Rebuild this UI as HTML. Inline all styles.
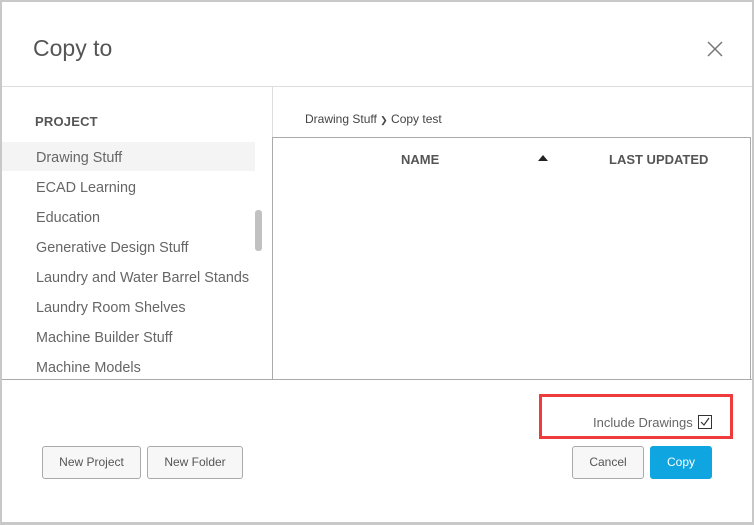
<!DOCTYPE html>
<html><head><style>
*{margin:0;padding:0;box-sizing:border-box}
body{width:754px;height:525px;background:#fff;font-family:"Liberation Sans",sans-serif;position:relative;overflow:hidden}
.frame{position:absolute;left:0;top:0;width:754px;height:525px;border:2px solid #c8c8c8;border-bottom-width:3px}
.a{position:absolute}
.item{position:absolute;left:36px;font-size:14.4px;color:#666}
.btn{position:absolute;height:33px;border:1px solid #aaa;border-radius:3px;background:#f7f7f7;font-size:12px;color:#555;text-align:center;line-height:31px}
</style></head><body>
<div class="frame"></div>
<div class="a" style="left:33px;top:35px;font-size:23px;color:#555">Copy to</div>
<svg class="a" style="left:707px;top:41px" width="16" height="16"><path d="M1 1L15 15M15 1L1 15" stroke="#777" stroke-width="1.5"/></svg>
<div class="a" style="left:2px;top:86px;width:750px;height:1px;background:#ddd"></div>
<div class="a" style="left:272px;top:87px;width:1px;height:292px;background:#ddd"></div>
<div class="a" style="left:35px;top:114px;font-size:13px;color:#555;font-weight:bold;letter-spacing:.2px">PROJECT</div>
<div class="a" style="left:2px;top:142px;width:253px;height:29px;background:#f4f4f5"></div>
<div class="item" style="top:150px">Drawing Stuff</div>
<div class="item" style="top:180px">ECAD Learning</div>
<div class="item" style="top:210px">Education</div>
<div class="item" style="top:240px">Generative Design Stuff</div>
<div class="item" style="top:270px">Laundry and Water Barrel Stands</div>
<div class="item" style="top:300px">Laundry Room Shelves</div>
<div class="item" style="top:330px">Machine Builder Stuff</div>
<div class="item" style="top:360px">Machine Models</div>
<div class="a" style="left:255px;top:210px;width:7px;height:41px;background:#c1c1c1;border-radius:3px"></div>
<div class="a" style="left:305px;top:112px;font-size:12px;color:#444">Drawing Stuff <span style="font-size:9px">❯</span> Copy test</div>
<div class="a" style="left:272px;top:137px;width:479px;height:243px;border:1px solid #aaa;border-bottom:none;border-right:1px solid #aaa"></div>
<div class="a" style="left:401px;top:152px;font-size:13px;font-weight:bold;color:#555">NAME</div>
<svg class="a" style="left:538px;top:155px" width="10" height="6"><path d="M0 6L5 0L10 6Z" fill="#222"/></svg>
<div class="a" style="left:609px;top:152px;font-size:13px;font-weight:bold;color:#555">LAST UPDATED</div>
<div class="a" style="left:2px;top:379px;width:750px;height:1px;background:#aaa"></div>
<div class="a" style="left:539px;top:394px;width:194px;height:45px;border:3px solid #ee3c3c"></div>
<div class="a" style="left:593px;top:415px;font-size:13px;color:#666">Include Drawings</div>
<svg class="a" style="left:698px;top:415px" width="14" height="14"><rect x=".5" y=".5" width="13" height="13" fill="#fff" stroke="#333"/><path d="M3 7L6 10L11 3" stroke="#333" fill="none" stroke-width="1.2"/></svg>
<div class="btn" style="left:42px;top:446px;width:99px">New Project</div>
<div class="btn" style="left:147px;top:446px;width:96px">New Folder</div>
<div class="btn" style="left:572px;top:446px;width:72px">Cancel</div>
<div class="btn" style="left:650px;top:446px;width:62px;background:#0ea5e0;border-color:#0ea5e0;color:#fff">Copy</div>
</body></html>
